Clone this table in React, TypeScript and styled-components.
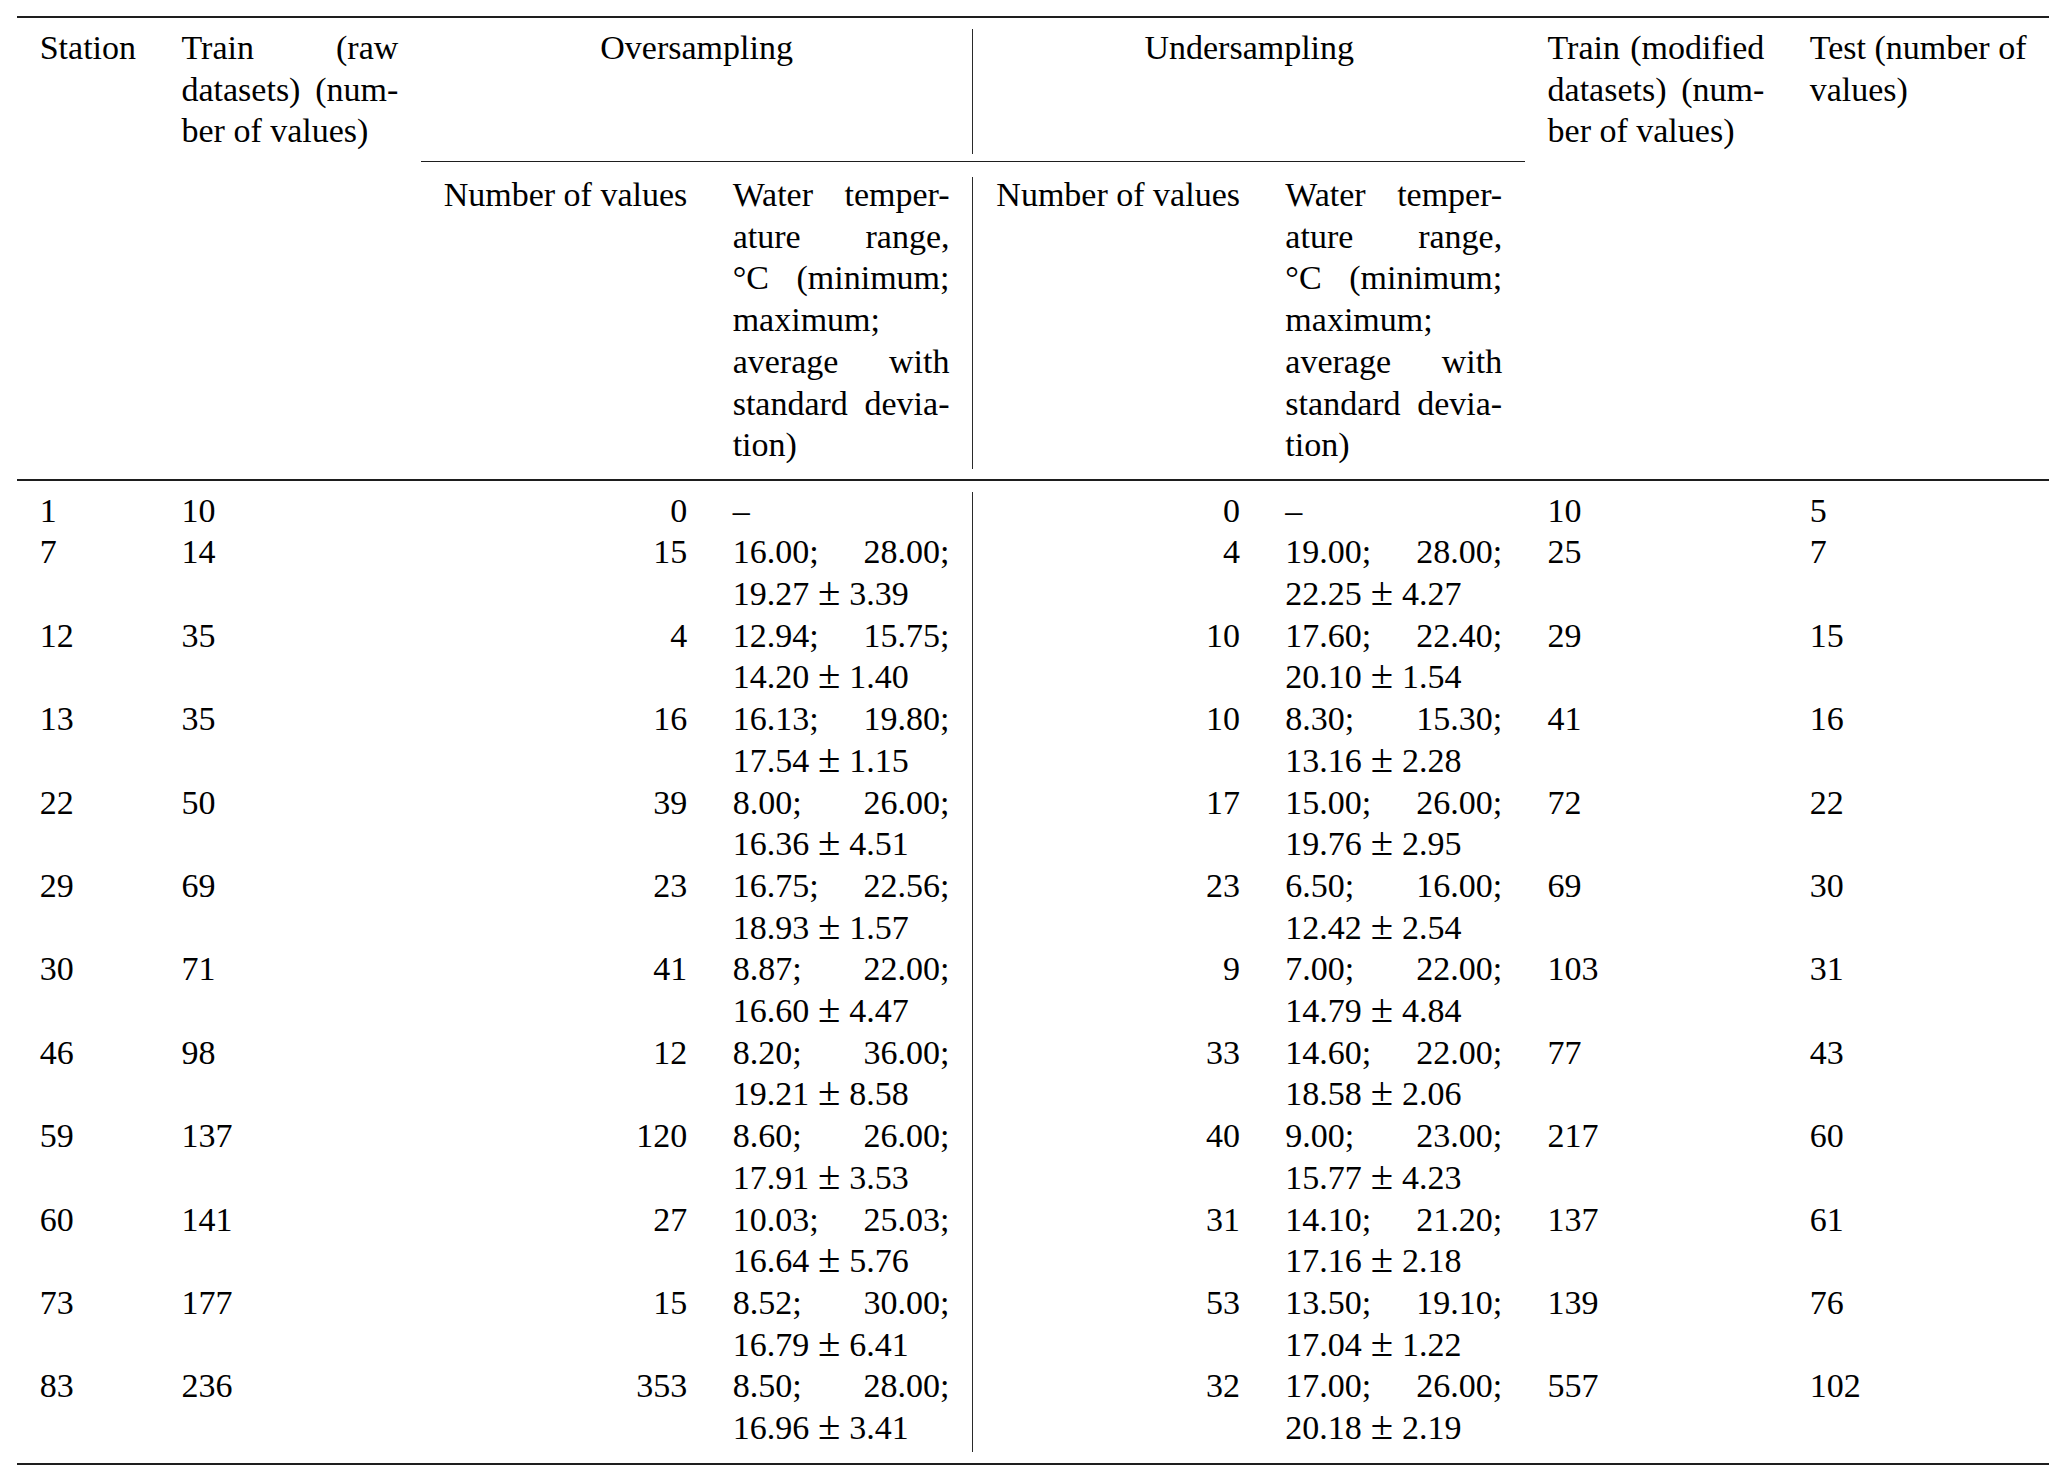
import React from "react";
import styled, { createGlobalStyle } from "styled-components";

const GlobalStyle = createGlobalStyle`
  html, body { margin: 0; padding: 0; background: #ffffff; }
  body {
    font-family: "Liberation Serif", "Times New Roman", serif;
    color: #000000;
  }
`;

const Page = styled.div`
  padding: 16px 0 0 17px;
`;

const Table = styled.div`
  display: grid;
  grid-template-columns: 141.8px 262.2px 289px 262.2px 1.5px 289px 262.2px 262.2px 262.2px;
  grid-template-rows: auto 125.1px auto auto auto repeat(12, auto) auto;
  width: 2032.3px;
  font-size: 34px;
  line-height: 41.7px;
`;

const Rule = styled.div<{
  $row: number;
  $from: number;
  $to: number;
  $thick: number;
  $above: number;
  $below: number;
}>`
  grid-row: ${(p) => p.$row};
  grid-column: ${(p) => p.$from} / ${(p) => p.$to};
  height: ${(p) => p.$thick}px;
  margin: ${(p) => p.$above}px 0 ${(p) => p.$below}px;
  background: #1e1e1e;
`;

const VRule = styled.div<{ $row: number; $span: number; $top: number; $bottom: number }>`
  grid-column: 5;
  grid-row: ${(p) => p.$row} / span ${(p) => p.$span};
  justify-self: center;
  width: 1px;
  background: #2a2a2a;
  margin-top: ${(p) => p.$top}px;
  margin-bottom: ${(p) => p.$bottom}px;
`;

const Cell = styled.div<{
  $row: number;
  $col: number;
  $span?: number;
  $rows?: number;
  $align?: "left" | "right" | "center";
}>`
  grid-row: ${(p) => p.$row} / span ${(p) => p.$rows ?? 1};
  grid-column: ${(p) => p.$col} / span ${(p) => p.$span ?? 1};
  padding: 0 22.7px;
  text-align: ${(p) => p.$align ?? "left"};
  white-space: nowrap;
`;

const Line = styled.div<{ $just?: boolean }>`
  white-space: nowrap;
  text-align: ${(p) => (p.$just ? "justify" : "left")};
  text-align-last: ${(p) => (p.$just ? "justify" : "left")};
`;

const Pm = styled.span`
  font-size: 1.2em;
  line-height: 0;
  margin: 0 8.9px;
`;

type Para = { text: string; just: boolean }[];

const trainRaw: Para = [
  { text: "Train (raw", just: true },
  { text: "datasets) (num-", just: true },
  { text: "ber of values)", just: false },
];

const trainMod: Para = [
  { text: "Train (modified", just: true },
  { text: "datasets) (num-", just: true },
  { text: "ber of values)", just: false },
];

const testHead: Para = [
  { text: "Test (number of", just: true },
  { text: "values)", just: false },
];

const waterHead: Para = [
  { text: "Water temper-", just: true },
  { text: "ature range,", just: true },
  { text: "°C (minimum;", just: true },
  { text: "maximum;", just: false },
  { text: "average with", just: true },
  { text: "standard devia-", just: true },
  { text: "tion)", just: false },
];

type Range = { min: string; max: string; avg: string; sd: string } | null;

type Row = {
  station: string;
  trainRaw: string;
  overN: string;
  over: Range;
  underN: string;
  under: Range;
  trainMod: string;
  test: string;
};

const r = (min: string, max: string, avg: string, sd: string): Range => ({ min, max, avg, sd });

const rows: Row[] = [
  { station: "1", trainRaw: "10", overN: "0", over: null, underN: "0", under: null, trainMod: "10", test: "5" },
  { station: "7", trainRaw: "14", overN: "15", over: r("16.00", "28.00", "19.27", "3.39"), underN: "4", under: r("19.00", "28.00", "22.25", "4.27"), trainMod: "25", test: "7" },
  { station: "12", trainRaw: "35", overN: "4", over: r("12.94", "15.75", "14.20", "1.40"), underN: "10", under: r("17.60", "22.40", "20.10", "1.54"), trainMod: "29", test: "15" },
  { station: "13", trainRaw: "35", overN: "16", over: r("16.13", "19.80", "17.54", "1.15"), underN: "10", under: r("8.30", "15.30", "13.16", "2.28"), trainMod: "41", test: "16" },
  { station: "22", trainRaw: "50", overN: "39", over: r("8.00", "26.00", "16.36", "4.51"), underN: "17", under: r("15.00", "26.00", "19.76", "2.95"), trainMod: "72", test: "22" },
  { station: "29", trainRaw: "69", overN: "23", over: r("16.75", "22.56", "18.93", "1.57"), underN: "23", under: r("6.50", "16.00", "12.42", "2.54"), trainMod: "69", test: "30" },
  { station: "30", trainRaw: "71", overN: "41", over: r("8.87", "22.00", "16.60", "4.47"), underN: "9", under: r("7.00", "22.00", "14.79", "4.84"), trainMod: "103", test: "31" },
  { station: "46", trainRaw: "98", overN: "12", over: r("8.20", "36.00", "19.21", "8.58"), underN: "33", under: r("14.60", "22.00", "18.58", "2.06"), trainMod: "77", test: "43" },
  { station: "59", trainRaw: "137", overN: "120", over: r("8.60", "26.00", "17.91", "3.53"), underN: "40", under: r("9.00", "23.00", "15.77", "4.23"), trainMod: "217", test: "60" },
  { station: "60", trainRaw: "141", overN: "27", over: r("10.03", "25.03", "16.64", "5.76"), underN: "31", under: r("14.10", "21.20", "17.16", "2.18"), trainMod: "137", test: "61" },
  { station: "73", trainRaw: "177", overN: "15", over: r("8.52", "30.00", "16.79", "6.41"), underN: "53", under: r("13.50", "19.10", "17.04", "1.22"), trainMod: "139", test: "76" },
  { station: "83", trainRaw: "236", overN: "353", over: r("8.50", "28.00", "16.96", "3.41"), underN: "32", under: r("17.00", "26.00", "20.18", "2.19"), trainMod: "557", test: "102" },
];

function Paragraph({ lines }: { lines: Para }) {
  return (
    <>
      {lines.map((l, i) => (
        <Line key={i} $just={l.just}>
          {l.text}
        </Line>
      ))}
    </>
  );
}

function RangeText({ range }: { range: Range }) {
  if (!range) return <Line>–</Line>;
  return (
    <>
      <Line $just>
        {range.min}; {range.max};
      </Line>
      <Line>
        {range.avg}
        <Pm>±</Pm>
        {range.sd}
      </Line>
    </>
  );
}

export default function App() {
  const bodyStart = 6;
  return (
    <Page>
      <GlobalStyle />
      <Table>
        <Rule $row={1} $from={1} $to={10} $thick={2} $above={0} $below={9} />

        <Cell $row={2} $rows={3} $col={1}>Station</Cell>
        <Cell $row={2} $rows={3} $col={2}>
          <Paragraph lines={trainRaw} />
        </Cell>
        <Cell $row={2} $col={3} $span={2} $align="center">Oversampling</Cell>
        <VRule $row={2} $span={1} $top={2} $bottom={-2} />
        <Cell $row={2} $col={6} $span={2} $align="center">Undersampling</Cell>
        <Cell $row={2} $rows={3} $col={8}>
          <Paragraph lines={trainMod} />
        </Cell>
        <Cell $row={2} $rows={3} $col={9}>
          <Paragraph lines={testHead} />
        </Cell>

        <Rule $row={3} $from={3} $to={8} $thick={1} $above={8.6} $below={12.3} />

        <Cell $row={4} $col={3}>Number of values</Cell>
        <Cell $row={4} $col={4}>
          <Paragraph lines={waterHead} />
        </Cell>
        <VRule $row={4} $span={1} $top={2.7} $bottom={-2.8} />
        <Cell $row={4} $col={6}>Number of values</Cell>
        <Cell $row={4} $col={7}>
          <Paragraph lines={waterHead} />
        </Cell>

        <Rule $row={5} $from={1} $to={10} $thick={2} $above={13.1} $below={8.6} />

        <VRule $row={bodyStart} $span={rows.length} $top={2.7} $bottom={-3.3} />
        {rows.map((row, i) => {
          const gr = bodyStart + i;
          return (
            <React.Fragment key={row.station}>
              <Cell $row={gr} $col={1}>{row.station}</Cell>
              <Cell $row={gr} $col={2}>{row.trainRaw}</Cell>
              <Cell $row={gr} $col={3} $align="right">{row.overN}</Cell>
              <Cell $row={gr} $col={4}>
                <RangeText range={row.over} />
              </Cell>
              <Cell $row={gr} $col={6} $align="right">{row.underN}</Cell>
              <Cell $row={gr} $col={7}>
                <RangeText range={row.under} />
              </Cell>
              <Cell $row={gr} $col={8}>{row.trainMod}</Cell>
              <Cell $row={gr} $col={9}>{row.test}</Cell>
            </React.Fragment>
          );
        })}

        <Rule $row={bodyStart + rows.length} $from={1} $to={10} $thick={2} $above={14.6} $below={0} />
      </Table>
    </Page>
  );
}
